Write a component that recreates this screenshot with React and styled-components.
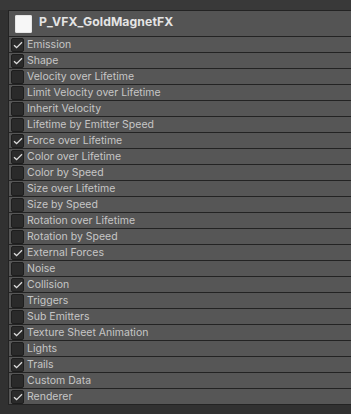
import React from "react";
import styled, { createGlobalStyle } from "styled-components";

const Global = createGlobalStyle`
  html, body { margin: 0; padding: 0; background: #333333; }
  body { font-family: Inter, "Noto Sans", sans-serif; }
`;

const Page = styled.div`
  width: 351px;
  height: 414px;
  overflow: hidden;
  display: flex;
  flex-direction: column;
  background: #313131;
`;

const TopBar = styled.div`
  height: 10px;
  background: #393939;
  flex: none;
`;

const Panel = styled.div`
  margin-left: 8px;
  border-left: 1px solid #232323;
  border-top: 1px solid #232323;
  border-bottom: 1px solid #232323;
  background: #555555;
  display: flex;
  flex-direction: column;
`;

const Header = styled.div`
  height: 25px;
  display: flex;
  align-items: center;
  gap: 7px;
  padding-left: 6px;
  background: #545454;
`;

const Swatch = styled.div`
  width: 17px;
  height: 18px;
  background: #f7f7f7;
  border-radius: 2px;
  box-shadow: inset 0 0 0 1px #e6e6e6;
`;

const Title = styled.span`
  font-size: 12.2px;
  font-weight: 700;
  color: #e4e4e4;
  letter-spacing: 0.1px;
  margin-top: -5px;
`;

const Row = styled.div`
  height: 15px;
  border-top: 1px solid #232323;
  display: flex;
  align-items: center;
  gap: 3px;
  padding-left: 2px;
  background: #565656;
`;

const Box = styled.div`
  width: 11px;
  height: 12px;
  border: 1px solid #1d1d1d;
  border-radius: 2px;
  background: #2a2a2a;
  display: flex;
  align-items: center;
  justify-content: center;
  flex: none;
`;

const Label = styled.span`
  font-size: 10.5px;
  color: #c6c6c6;
  line-height: 15px;
  white-space: nowrap;
`;

const Check = () => (
  <svg width="10" height="8" viewBox="0 0 10 8">
    <path d="M1 4.2 L3.6 6.6 L9 1.2" fill="none" stroke="#dcdcdc" strokeWidth="1.3" />
  </svg>
);

const modules = [
  ["Emission", true],
  ["Shape", true],
  ["Velocity over Lifetime", false],
  ["Limit Velocity over Lifetime", false],
  ["Inherit Velocity", false],
  ["Lifetime by Emitter Speed", false],
  ["Force over Lifetime", true],
  ["Color over Lifetime", true],
  ["Color by Speed", false],
  ["Size over Lifetime", false],
  ["Size by Speed", false],
  ["Rotation over Lifetime", false],
  ["Rotation by Speed", false],
  ["External Forces", true],
  ["Noise", false],
  ["Collision", true],
  ["Triggers", false],
  ["Sub Emitters", false],
  ["Texture Sheet Animation", true],
  ["Lights", false],
  ["Trails", true],
  ["Custom Data", false],
  ["Renderer", true],
];

export default function App() {
  return (
    <Page>
      <Global />
      <TopBar />
      <Panel>
        <Header>
          <Swatch />
          <Title>P_VFX_GoldMagnetFX</Title>
        </Header>
        {modules.map(([name, on]) => (
          <Row key={name}>
            <Box>{on && <Check />}</Box>
            <Label>{name}</Label>
          </Row>
        ))}
      </Panel>
    </Page>
  );
}
